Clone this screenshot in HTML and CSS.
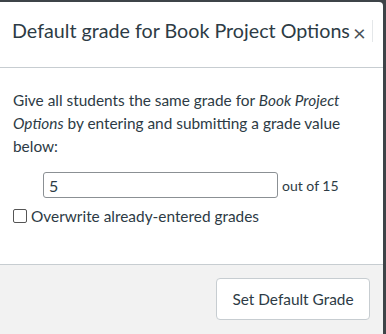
FILE: index.html
```html
<!DOCTYPE html>
<html>
<head>
<meta charset="utf-8">
<link rel="stylesheet" href="styles.css">
</head>
<body>
<div class="dialog">
  <div class="header">
    <h1 class="title">Default grade for Book Project Options</h1>
    <span class="close">×</span>
    <span class="edge"></span>
  </div>
  <div class="content">
    <p class="intro">Give all students the same grade for <em>Book Project Options</em> by entering and submitting a grade value below:</p>
    <div class="grade-row">
      <input class="grade-input" type="text" value="5">
      <span class="outof">out of 15</span>
    </div>
    <label class="check-row"><span class="box"></span>Overwrite already-entered grades</label>
  </div>
  <div class="footer">
    <button class="btn">Set Default Grade</button>
  </div>
</div>
</body>
</html>
```
FILE: styles.css
```css
html, body {
  margin: 0;
  padding: 0;
  height: 100%;
  overflow: hidden;
}
body {
  background: #3e4448;
  font-family: Lato, "Liberation Sans", sans-serif;
  color: #2d3b45;
}
.dialog {
  margin-top: 2px;
  width: 383px;
  height: 340px;
  background: #fff;
  border-top-right-radius: 4px;
  display: flex;
  flex-direction: column;
}
.header {
  height: 57px;
  padding: 0 0 8px 12px;
  border-bottom: 1px solid #c7cdd1;
  display: flex;
  align-items: center;
  box-sizing: content-box;
  position: relative;
}
.title {
  margin: 0;
  font-size: 19.7px;
  font-weight: 400;
  line-height: 26px;
  white-space: nowrap;
  color: #2d3b45;
}
.close {
  font-size: 22px;
  line-height: 20px;
  margin-left: 3px;
  margin-top: 4px;
  color: #4a5258;
}
.edge {
  position: absolute;
  right: 10px;
  top: 18px;
  width: 1px;
  height: 22px;
  background: #e4e7e9;
}
.content {
  padding: 21px 13px 0 13px;
  height: 175px;
}
.intro {
  margin: 0;
  font-size: 15.4px;
  line-height: 23px;
}
.grade-row {
  display: flex;
  align-items: center;
  margin-top: 14px;
  padding-left: 30px;
}
.grade-input {
  width: 235px;
  height: 26px;
  box-sizing: border-box;
  border: 1px solid #8b9094;
  border-radius: 3px;
  padding: 0 5px;
  font-family: Lato, "Liberation Sans", sans-serif;
  font-size: 16px;
  color: #2d3b45;
  margin: 0;
}
.outof {
  margin-left: 4px;
  font-size: 14px;
}
.check-row {
  display: flex;
  align-items: center;
  margin-top: 9px;
  font-size: 15.4px;
}
.box {
  width: 12px;
  height: 12px;
  border: 1px solid #555;
  border-radius: 2px;
  margin-right: 4px;
  background: #fff;
}
.footer {
  flex: 1;
  background: #f2f2f2;
  border-top: 1px solid #c7cdd1;
  display: flex;
  justify-content: flex-end;
  align-items: flex-start;
  padding: 13px 13px 0 0;
}
.btn {
  width: 154px;
  height: 42px;
  background: #fff;
  border: 1px solid #c7cdd1;
  border-radius: 4px;
  font-family: Lato, "Liberation Sans", sans-serif;
  font-size: 15.4px;
  color: #2d3b45;
  padding: 0;
}
```
